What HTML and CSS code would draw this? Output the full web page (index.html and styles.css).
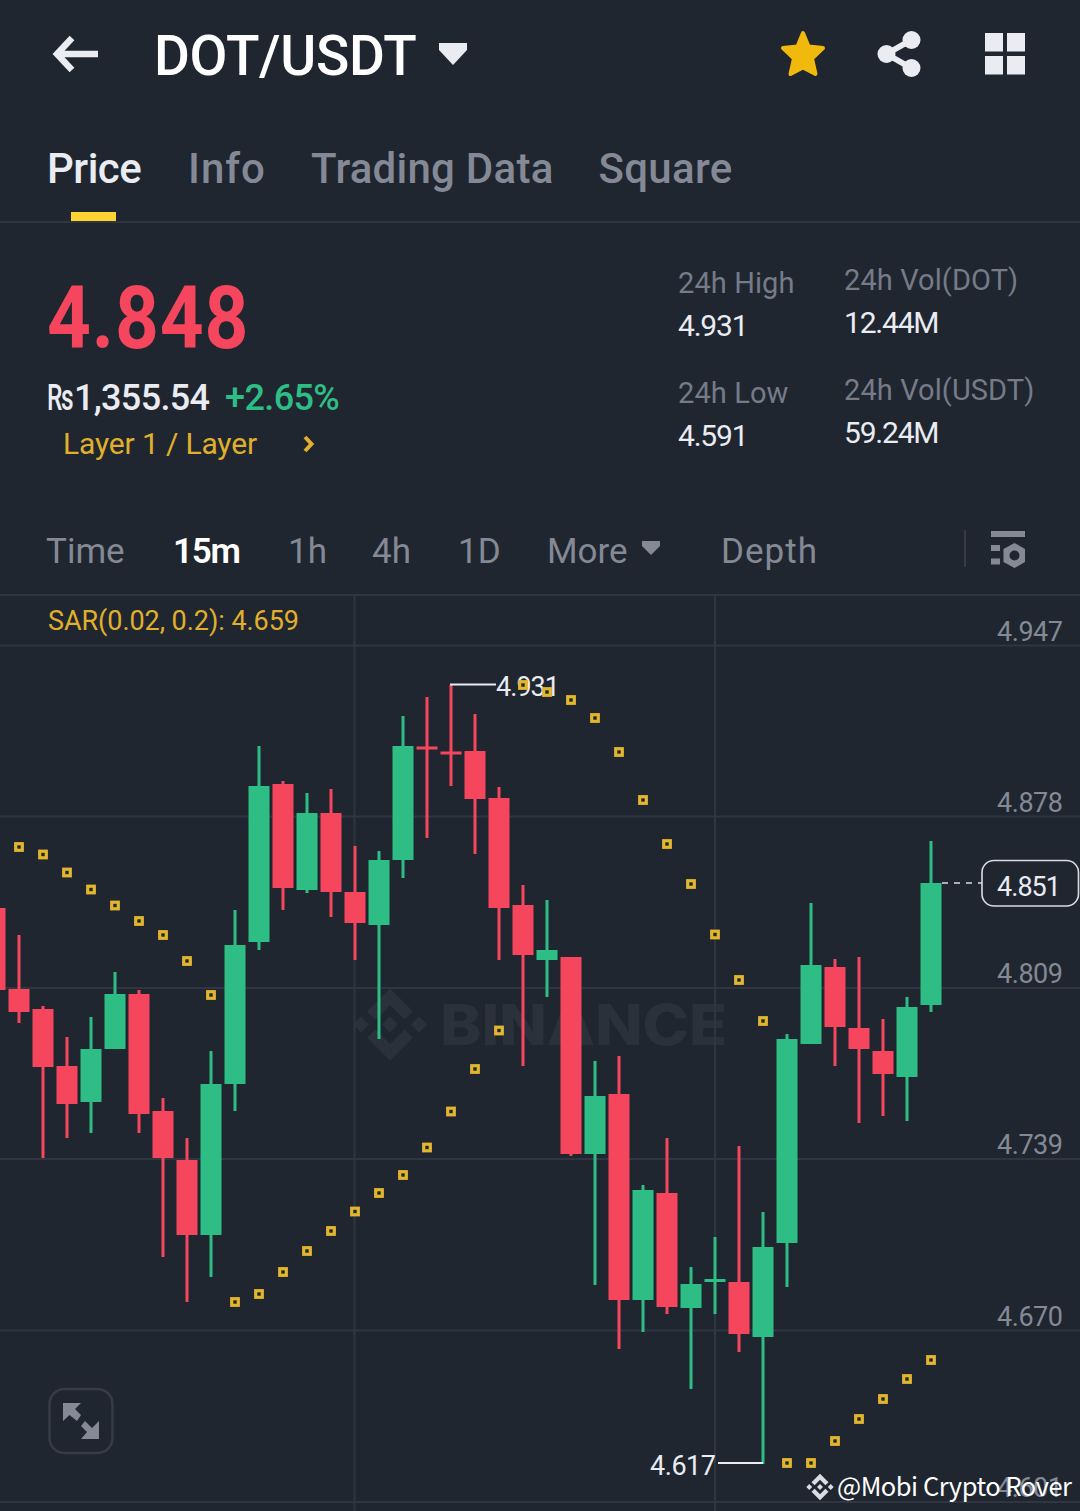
FILE: index.html
```html
<!DOCTYPE html>
<html lang="en">
<head>
<meta charset="utf-8">
<title>DOT/USDT</title>
<link rel="stylesheet" href="styles.css">
</head>
<body>
<main class="screen">
  <header class="header">
    <svg class="back" viewBox="0 0 48 40" width="48" height="40"><path d="M46 20H6M20 4L5 20L20 36"/></svg>
    <h1 class="pair">DOT/USDT</h1>
    <svg class="pair-caret" viewBox="0 0 28 24" width="28" height="24"><path d="M0 1H28V8L14 23L0 8Z"/></svg>
    <div class="actions">
      <svg class="star" viewBox="0 0 46 48" width="46" height="48"><path d="M23 3L28.5 16.5L43 18L32 28.5L35.5 44L23 37.5L10.500 44L14 28.500L3 18L17.500 16.500Z"/></svg>
      <svg class="share" viewBox="0 0 44 48" width="44" height="48"><path d="M9.500 24L35 9.500M9.500 24L35 38.500"/><circle cx="9.500" cy="24" r="9"/><circle cx="34.500" cy="10" r="9"/><circle cx="34.500" cy="38" r="9"/></svg>
      <svg class="grid-icon" viewBox="0 0 40 42" width="40" height="42"><path d="M0 0H18V18.500H0ZM22 0H40V18.500H22ZM0 23H18V41.500H0ZM22 23H40V41.500H22Z"/></svg>
    </div>
  </header>

  <nav class="tabs">
    <span class="tab tab-active">Price</span>
    <span class="tab tab-info">Info</span>
    <span class="tab tab-data">Trading Data</span>
    <span class="tab tab-square">Square</span>
  </nav>

  <section class="ticker">
    <div class="quote">
      <div class="last">4.848</div>
      <div class="fiat"><span class="fiat-value"><span class="rupee">Rs</span>1,355.54</span><span class="change">+2.65%</span></div>
      <div class="category"><span>Layer 1 / Layer</span><svg viewBox="0 0 12 18" width="12" height="18"><path d="M2 2L8.500 9L2 16"/></svg></div>
    </div>
    <dl class="stats stats-range">
      <dt>24h High</dt><dd>4.931</dd>
      <dt>24h Low</dt><dd>4.591</dd>
    </dl>
    <dl class="stats stats-volume">
      <dt>24h Vol(DOT)</dt><dd>12.44M</dd>
      <dt>24h Vol(USDT)</dt><dd>59.24M</dd>
    </dl>
  </section>

  <nav class="intervals">
    <span class="iv iv-time">Time</span>
    <span class="iv iv-15 iv-active">15m</span>
    <span class="iv iv-1h">1h</span>
    <span class="iv iv-4h">4h</span>
    <span class="iv iv-1d">1D</span>
    <span class="iv iv-more">More<svg viewBox="0 0 18 14" width="18" height="14"><path d="M0 0H18V5L9 14L0 5Z"/></svg></span>
    <span class="iv iv-depth">Depth</span>
    <span class="divider"></span>
    <svg class="settings" viewBox="0 0 36 38" width="36" height="38"><path fill-rule="evenodd" d="M1 1H35V7H1ZM1 15H10V21H1ZM1 28.500H10V34.500H1ZM24.500 13L35 19V32L24.500 38L13.500 32V19ZM24.500 20.500A5 5 0 1 0 24.500 30.500A5 5 0 1 0 24.500 20.500Z"/></svg>
  </nav>

  <svg class="chart" viewBox="0 594 1080 917" width="1080" height="917">
    <defs>
      <rect id="sar" x="-3.300" y="-3.300" width="6.600" height="6.600"/>
      <g id="logo">
        <path d="M0-36L23-13L14.500-5L0-19.500L-14.500-5L-23-13ZM0 36L23 13L14.500 5L0 19.500L-14.500 5L-23 13ZM0-8L8 0L0 8L-8 0ZM-29-8L-21 0L-29 8L-37 0ZM29-8L37 0L29 8L21 0Z"/>
      </g>
    </defs>

    <g class="watermark">
      <use href="#logo" x="390" y="1024.500"/>
      <text x="440" y="1045" textLength="287" lengthAdjust="spacingAndGlyphs">BINANCE</text>
    </g>

    <path class="grid" d="M0 595H1080M0 645.500H1080M0 816.500H1080M0 988H1080M0 1159H1080M0 1330.500H1080M0 1502H1080M354.500 594V1511M715 594V1511"/>

    <g class="axis">
      <text x="997" y="641" textLength="66">4.947</text>
      <text x="997" y="812" textLength="66">4.878</text>
      <text x="997" y="983" textLength="66">4.809</text>
      <text x="997" y="1154" textLength="66">4.739</text>
      <text x="997" y="1326" textLength="66">4.670</text>
      <text x="997" y="1497" textLength="66">4.601</text>
    </g>

    <path class="wick down" d="M19 935V1023M43 1006V1158M67 1037V1138M139 990V1133M163 1098V1257M187 1138V1302M283 781V910M331 789V917M355 846V960M427 697V838M451 685V786M475 714V854M499 787V960M523 885V1066M571 957V1156M619 1056V1349M667 1138V1314M739 1146V1352M835 959V1066M859 957V1123M883 1019V1116M416.500 748H437.500M440.500 753H461.500"/>
    <path class="wick up" d="M91 1017V1133M115 972V1049M211 1051V1277M235 910V1111M259 746V950M307 793V893M379 851V1039M403 716V878M547 900V997M595 1061V1285M643 1185V1332M691 1267V1389M715 1237V1314M763 1212V1464M787 1034V1287M811 903V1044M907 997V1121M931 841V1012M704.500 1280.500H725.500"/>
    <path class="body down" d="M-5 908V990M19 989V1012M43 1009V1067M67 1066V1104M139 994V1114M163 1111V1158M187 1160V1235M283 784V888M331 813V892M355 892V923M475 751V799M499 798V908M523 905V955M571 957V1154M619 1094V1300M667 1193V1307M739 1282V1334M835 967V1027M859 1028V1049M883 1051V1074"/>
    <path class="body up" d="M91 1049V1102M115 994V1049M211 1084V1235M235 945V1084M259 786V942M307 813V890M379 860V925M403 746V860M547 950V960M595 1096V1154M643 1190V1300M691 1284V1308M763 1247V1337M787 1039V1243M811 965V1044M907 1007V1077M931 883V1005"/>

    <g class="extreme">
      <path d="M450 684.500H496M718 1463H763"/>
      <text x="496" y="696" textLength="64">4.931</text>
      <text x="650" y="1475" textLength="66">4.617</text>
    </g>

    <g class="sar">
      <use href="#sar" x="19" y="847"/><use href="#sar" x="43" y="854.500"/><use href="#sar" x="67" y="872.500"/><use href="#sar" x="91" y="889.500"/><use href="#sar" x="115" y="905.500"/><use href="#sar" x="139" y="921"/><use href="#sar" x="163" y="935"/><use href="#sar" x="187" y="961"/><use href="#sar" x="211" y="995"/>
      <use href="#sar" x="235" y="1302"/><use href="#sar" x="259" y="1294"/><use href="#sar" x="283" y="1272"/><use href="#sar" x="307" y="1251"/><use href="#sar" x="331" y="1231"/><use href="#sar" x="355" y="1211.500"/><use href="#sar" x="379" y="1193"/><use href="#sar" x="403" y="1175"/><use href="#sar" x="427" y="1147.500"/><use href="#sar" x="451" y="1111.500"/><use href="#sar" x="475" y="1069"/><use href="#sar" x="499" y="1030.500"/>
      <use href="#sar" x="523" y="685"/><use href="#sar" x="547" y="692"/><use href="#sar" x="571" y="700"/><use href="#sar" x="595" y="718"/><use href="#sar" x="619" y="752"/><use href="#sar" x="643" y="800"/><use href="#sar" x="667" y="844"/><use href="#sar" x="691" y="884"/><use href="#sar" x="715" y="934.500"/><use href="#sar" x="739" y="980"/><use href="#sar" x="763" y="1021"/>
      <use href="#sar" x="787" y="1463"/><use href="#sar" x="811" y="1463"/><use href="#sar" x="835" y="1441"/><use href="#sar" x="859" y="1419"/><use href="#sar" x="883" y="1399"/><use href="#sar" x="907" y="1379"/><use href="#sar" x="931" y="1360"/>
    </g>
    <text class="indicator" x="48" y="630" textLength="251">SAR(0.02, 0.2): 4.659</text>

    <g class="current">
      <path d="M942 883H982" stroke-dasharray="6 6"/>
      <rect x="982" y="860.500" width="96.500" height="45.500" rx="12"/>
      <text x="997" y="896" textLength="64">4.851</text>
    </g>

    <g class="expand">
      <rect x="49.500" y="1389" width="63" height="64" rx="15"/>
      <path d="M63 1403H81L75 1409L81 1415L77 1421L69.500 1415L63 1421ZM99 1439H81L87 1432L81 1426L85 1421L92 1428L99 1421Z"/>
    </g>

    <g class="author">
      <use href="#logo" transform="translate(820 1487) scale(.37)"/>
      <text x="837" y="1496" textLength="235">@Mobi Crypto Rover</text>
    </g>
  </svg>
</main>
</body>
</html>
```
FILE: styles.css
```css
* { box-sizing: border-box; }

body {
  margin: 0;
  background: #1f2630;
  color: #eaecf2;
  font-family: Roboto, "Liberation Sans", sans-serif;
}

.screen { width: 1080px; height: 1511px; overflow: hidden; }

svg { display: block; flex: none; }

/* Header */
.header { display: flex; align-items: center; height: 108px; padding: 0 55px 0 52px; }
.back { fill: none; stroke: #eaecf2; stroke-width: 6.500; }
.pair { margin: 3px 0 0 54px; width: 264px; color: #fff; font-size: 55px; font-weight: 500; line-height: 64px; letter-spacing: -.3px; white-space: nowrap; }
.pair-caret { margin-left: 21px; fill: #eaecf2; }
.actions { display: flex; align-items: center; margin-left: auto; }
.star { fill: #f0b90b; stroke: #f0b90b; stroke-width: 4; stroke-linejoin: round; }
.share { margin-left: 51px; fill: #eaecf2; stroke: #eaecf2; }
.share path { stroke-width: 6; }
.share circle { stroke: none; }
.grid-icon { margin-left: 64px; fill: #eaecf2; }

/* Section tabs */
.tabs { display: flex; height: 115px; padding: 35px 0 0 47px; border-bottom: 2px solid #2f3541; }
.tab { flex: none; height: 78px; color: #848995; font-size: 42px; font-weight: 500; line-height: 52px; white-space: nowrap; }
.tab-active { width: 141px; color: #eaecf2; letter-spacing: -.5px; }
.tab-active::after { content: ""; display: block; width: 45px; height: 9px; margin: 17px 0 0 24px; background: #fcd535; }
.tab-info { width: 123px; letter-spacing: 1px; }
.tab-data { width: 287.500px; letter-spacing: .25px; }
.tab-square { letter-spacing: .3px; }

/* Ticker */
.ticker { display: flex; height: 282px; padding-left: 47px; }
.quote { width: 631px; padding-top: 44px; }
.last { height: 100px; color: #f6465d; font-size: 87px; font-weight: 700; line-height: 102px; letter-spacing: 1px; transform: scaleX(.88); transform-origin: left; }
.fiat { display: flex; height: 48px; margin-top: 7px; font-size: 36px; font-weight: 500; line-height: 48px; }
.fiat-value { display: flex; width: 178px; letter-spacing: -.7px; }
.rupee { width: 27px; letter-spacing: -2px; transform: scaleX(.68); transform-origin: left; }
.change { color: #2ebd85; letter-spacing: -.6px; }
.category { display: flex; align-items: center; height: 43px; padding-left: 16px; color: #e0b02c; font-size: 30px; letter-spacing: -.15px; white-space: nowrap; }
.category span { width: 240px; }
.category path { fill: none; stroke: #e0b02c; stroke-width: 4; }
.stats { margin: 0; padding-top: 40px; white-space: nowrap; }
.stats-range { width: 166px; }
.stats-volume { padding-top: 37px; }
.stats dt { height: 41px; color: #757b87; font-size: 29px; line-height: 40px; letter-spacing: .1px; }
.stats dd { height: 69px; margin: 0; font-size: 30px; line-height: 44px; letter-spacing: -1.200px; }

/* Interval selector */
.intervals { display: flex; height: 89px; padding: 23px 54px 0 46px; }
.iv { flex: none; color: #848995; font-size: 35px; line-height: 48px; white-space: nowrap; }
.iv-time { width: 127px; }
.iv-15 { width: 115px; letter-spacing: -1.200px; }
.iv-active { color: #fff; font-weight: 600; }
.iv-1h { width: 84px; }
.iv-4h { width: 86px; }
.iv-1d { width: 89px; }
.iv-more { display: flex; width: 174px; }
.iv-more svg { margin: 13px 0 0 14px; fill: #848995; }
.iv-depth { letter-spacing: 1px; }
.divider { width: 2px; height: 37px; margin: 2px 0 0 auto; background: #363b47; }
.settings { margin: 2px 0 0 24px; fill: #848995; }

/* Chart */
.chart text { font-size: 27px; }
.chart .watermark { fill: #2b313b; }
.chart .watermark text { font-family: Inter, "Open Sans", sans-serif; font-size: 57px; font-weight: 800; }
.grid { fill: none; stroke: #2f3541; stroke-width: 2; }
.axis { fill: #848995; }
.wick { fill: none; stroke-width: 3; }
.body { fill: none; stroke-width: 21; }
.down { stroke: #f6465d; }
.up { stroke: #2ebd85; }
.extreme { fill: #eaecf2; stroke: none; }
.extreme path { stroke: #eaecf2; stroke-width: 1.800; }
.sar { fill: #1f2630; stroke: #e3b62f; stroke-width: 3.200; }
.indicator { fill: #e0b02c; }
.current { fill: #eaecf2; }
.current path, .current rect { fill: #1f2630; stroke: #d9dce3; stroke-width: 1.600; }
.expand rect { fill: none; stroke: #363b47; stroke-width: 2.500; }
.expand path { fill: #848995; }
.author { fill: #d9dce3; }
.chart .author text { fill: #fff; font-family: "Noto Sans CJK SC", sans-serif; font-size: 25.500px; font-weight: 400; }
```
